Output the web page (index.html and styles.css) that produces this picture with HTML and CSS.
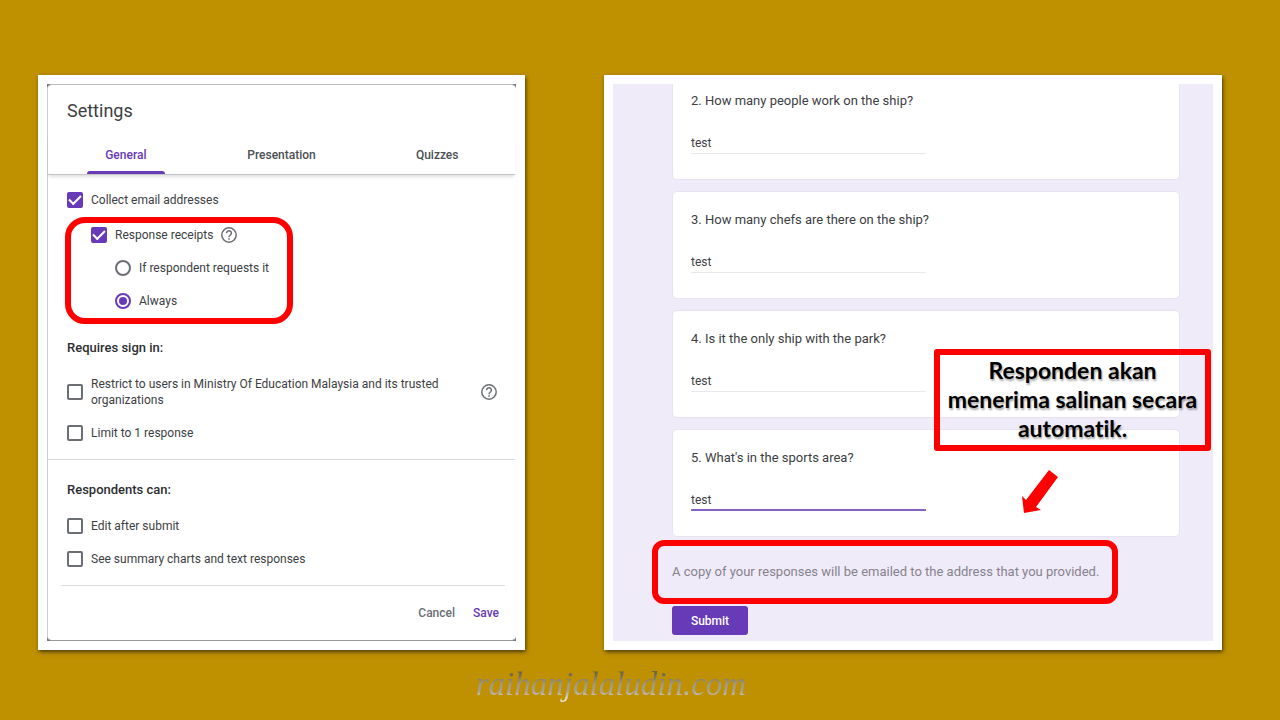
FILE: index.html
```html
<!DOCTYPE html>
<html lang="en">

<head>
    <meta charset="UTF-8">
    <meta name="viewport" content="width=device-width, initial-scale=1.0">
    <title>Response receipts</title>
    <link rel="stylesheet" href="styles.css">
</head>

<body>

    <main class="slide">
        <section class="frame frame-settings">
            <div class="corners">
                <form class="settings">
                    <h1>Settings</h1>
                    <nav class="tabs">
                        <a href="#general" class="show">General</a>
                        <a href="#presentation">Presentation</a>
                        <a href="#quizzes">Quizzes</a>
                    </nav>

                    <div class="group" id="general">
                        <label class="row"><input type="checkbox" checked>Collect email addresses</label>
                        <div class="mark receipts">
                            <div class="row">
                                <input type="checkbox" id="receipts" checked>
                                <label for="receipts">Response receipts</label>
                                <svg class="help" viewBox="0 0 16 16">
                                    <circle cx="8" cy="8" r="7.2" />
                                    <path d="M5.6 6.3a2.4 2.4 0 1 1 3.8 1.8C8.5 8.8 8 9.1 8 10.2" />
                                    <path d="M8 11.2v1.6" />
                                </svg>
                            </div>
                            <label class="row sub"><input type="radio" name="when">If respondent requests it</label>
                            <label class="row sub"><input type="radio" name="when" checked>Always</label>
                        </div>

                        <h2>Requires sign in:</h2>
                        <div class="rows">
                            <div class="row">
                                <input type="checkbox" id="restrict">
                                <label for="restrict" class="long">Restrict to users in Ministry Of Education Malaysia and its trusted organizations</label>
                                <svg class="help right" viewBox="0 0 16 16">
                                    <circle cx="8" cy="8" r="7.2" />
                                    <path d="M5.6 6.3a2.4 2.4 0 1 1 3.8 1.8C8.5 8.8 8 9.1 8 10.2" />
                                    <path d="M8 11.2v1.6" />
                                </svg>
                            </div>
                            <label class="row"><input type="checkbox">Limit to 1 response</label>
                        </div>
                    </div>

                    <div class="group respondents">
                        <h2>Respondents can:</h2>
                        <div class="rows">
                            <label class="row"><input type="checkbox">Edit after submit</label>
                            <label class="row"><input type="checkbox">See summary charts and text responses</label>
                        </div>
                    </div>

                    <div class="actions">
                        <button type="button">Cancel</button>
                        <button type="button" class="save">Save</button>
                    </div>
                </form>
            </div>
        </section>

        <section class="frame frame-form">
            <form class="form">
                <div class="card first">
                    <label for="q2">2. How many people work on the ship?</label>
                    <input type="text" id="q2" value="test">
                </div>
                <div class="card">
                    <label for="q3">3. How many chefs are there on the ship?</label>
                    <input type="text" id="q3" value="test">
                </div>
                <div class="card">
                    <label for="q4">4. Is it the only ship with the park?</label>
                    <input type="text" id="q4" value="test">
                </div>
                <div class="card">
                    <label for="q5">5. What's in the sports area?</label>
                    <input type="text" id="q5" class="active" value="test">
                </div>
                <p class="mark notice">A copy of your responses will be emailed to the address that you provided.</p>
                <button type="button" class="submit">Submit</button>

                <!-- callout over the form -->
                <div class="callout">
                    <p>Responden akan menerima salinan secara automatik.</p>
                    <svg class="arrow" viewBox="0 0 38 44">
                        <polygon points="28,0 37,7 15,37 20,40 3,43 1,26 5,30" />
                    </svg>
                </div>
            </form>
        </section>
    </main>

    <footer><span>raihanjalaludin.com</span></footer>

</body>

</html>
```
FILE: styles.css
```css
* {
    padding: 0;
    margin: 0;
    box-sizing: border-box;
}

body {
    background: #bf9000;
    color: #3c4043;
    font-family: Roboto, "Liberation Sans", sans-serif;
    font-size: 12px;
    line-height: 16px;
}

.slide {
    display: flex;
    gap: 79px;
    padding: 75px 58px 0 38px;
}

.frame {
    display: flex;
    background: #fff;
    padding: 9px;
    box-shadow: 1px 2px 4px rgba(0, 0, 0, 0.6);
}

.frame > * {
    flex: 1;
}

.frame-settings {
    flex: 469;
}

.frame-form {
    flex: 600;
}

.mark {
    border: 6px solid #f00;
}

/* settings */

.corners {
    background: #777;
}

.settings {
    height: 100%;
    background: #fff;
    border: 1px solid #ccc;
    border-top-color: #bbb;
    border-bottom-color: #999;
    border-right-color: #fff;
    border-radius: 5px;
}

h1 {
    padding: 14px 19px 12px;
    font-size: 18px;
    font-weight: 400;
    line-height: 24px;
}

.tabs {
    display: flex;
    border-bottom: 1px solid #c4c4c4;
    box-shadow: 0 3px 3px -1px rgba(0, 0, 0, 0.12);
}

.tabs a {
    flex: 1;
    display: flex;
    flex-direction: column;
    align-items: center;
    height: 39px;
    padding-top: 12px;
    font-size: 12px;
    font-weight: 500;
    color: #4c4f53;
    text-decoration: none;
}

.tabs a.show {
    color: #673ab7;
}

.tabs a.show::after {
    content: "";
    width: 78px;
    height: 3px;
    margin-top: auto;
    background: #673ab7;
    border-radius: 3px 3px 0 0;
}

.group {
    padding: 17px 18px 18px 19px;
}

.rows {
    display: flex;
    flex-direction: column;
    gap: 17px;
}

.row {
    display: flex;
    align-items: center;
    gap: 8px;
}

.long {
    width: 350px;
}

.receipts {
    display: flex;
    flex-direction: column;
    gap: 17px;
    width: fit-content;
    margin: 9px 0 16px -2px;
    padding: 4px 18px 9px 20px;
    border-radius: 20px;
}

.sub {
    padding-left: 24px;
}

h2 {
    margin-bottom: 20px;
    font-size: 13px;
    font-weight: 500;
    line-height: 16px;
    color: #2c2e31;
}

.row input {
    appearance: none;
    flex: none;
    display: flex;
    align-items: center;
    justify-content: center;
    width: 16px;
    height: 16px;
    border: 2px solid #6b6e73;
    border-radius: 2px;
}

.row input:checked {
    border-color: #673ab7;
}

.row input[type=checkbox]:checked {
    background: #673ab7;
}

.row input[type=checkbox]:checked::after {
    content: "";
    flex: none;
    width: 10px;
    height: 5px;
    margin-bottom: 4px;
    border-left: 2px solid #fff;
    border-bottom: 2px solid #fff;
    transform: rotate(-45deg);
}

.row input[type=radio] {
    border-radius: 50%;
}

.row input[type=radio]:checked::after {
    content: "";
    width: 8px;
    height: 8px;
    border-radius: 50%;
    background: #673ab7;
}

.help {
    flex: none;
    width: 16px;
    height: 16px;
    fill: none;
    stroke: #6b6e73;
    stroke-width: 1.5;
}

.right {
    margin-left: auto;
}

.respondents {
    padding-top: 22px;
    border-top: 1px solid #dadce0;
}

.actions {
    display: flex;
    justify-content: flex-end;
    gap: 18px;
    margin: 0 10px 0 13px;
    padding: 19px 6px;
    border-top: 1px solid #dadce0;
}

button {
    border: none;
    background: none;
    color: #6b6e73;
    font: 500 12px/16px Roboto, "Liberation Sans", sans-serif;
}

.save {
    color: #673ab7;
}

/* form */

.form {
    position: relative;
    padding: 0 33px 6px 59px;
    background: #f0ebf9;
}

.card {
    margin-bottom: 11px;
    padding: 20px 18px 25px;
    background: #fff;
    border: 1px solid #e8e3f1;
    border-radius: 5px;
}

.first {
    padding-top: 9px;
    border-top: none;
    border-radius: 0 0 5px 5px;
}

.card label {
    display: block;
    margin-bottom: 25px;
    font-size: 13px;
}

.card input {
    display: block;
    width: 50%;
    height: 20px;
    padding-bottom: 2px;
    border: none;
    border-bottom: 1px solid #e8e8eb;
    outline: none;
    color: #3c4043;
    font: 12px/16px Roboto, "Liberation Sans", sans-serif;
}

.card input.active {
    padding-bottom: 1px;
    border-bottom: 2px solid #8560c7;
}

.notice {
    width: fit-content;
    margin: -8px 0 2px -20px;
    padding: 18px 13px 18px 14px;
    border-radius: 12px;
    color: #85828c;
    font-size: 13px;
}

.submit {
    width: 76px;
    height: 29px;
    background: #673ab7;
    border-radius: 3px;
    color: #fff;
}

.callout {
    position: absolute;
    top: 265px;
    right: 2px;
    width: 277px;
}

.callout p {
    padding: 1px 4px 2px;
    border: 6px solid #f00;
    border-radius: 3px;
    color: #000;
    font: 700 23px/29px Lato, "Liberation Sans", sans-serif;
    font-variant-ligatures: none;
    text-align: center;
    text-shadow: 1px 2px 2px rgba(0, 0, 0, 0.35);
}

.arrow {
    display: block;
    width: 38px;
    height: 44px;
    margin: 19px 0 0 87px;
    fill: #f00;
}

footer {
    margin-top: 14px;
    padding-right: 58px;
    text-align: center;
}

footer span {
    background: linear-gradient(#6b6250 20%, #a09a88 50%, #a8a294 70%, #e8e4da 95%);
    background-clip: text;
    color: transparent;
    font: italic 33px/40px "Liberation Serif", serif;
}
```
